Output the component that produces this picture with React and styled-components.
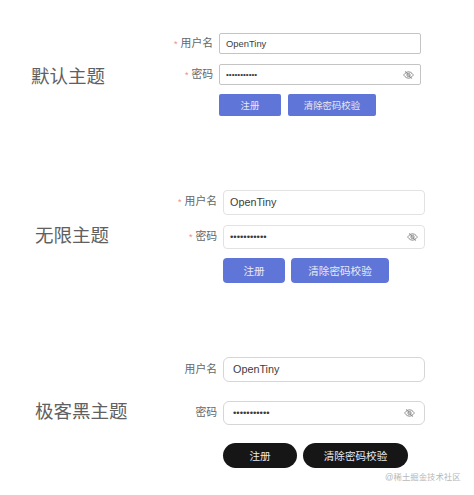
import styled, { createGlobalStyle } from "styled-components"

const GlobalStyle = createGlobalStyle`
    html, body {
        margin: 0;
        padding: 0;
        background: #fff;
    }
`

const themes = [
    {
        name: "默认主题",
        required: true,
        offset: 31,
        titleShift: 4,
        inputHeight: 21,
        inputFont: 9.4,
        inputPadding: 6,
        dotFont: 8.1,
        border: "#c4c4c4",
        radius: 2,
        rowGap: 10,
        buttonHeight: 22,
        buttonFont: 9.4,
        buttonGap: 7,
        buttonRadius: 2,
        buttonColor: "#5f76d8",
        widths: [62, 88],
        iconRight: 7,
    },
    {
        name: "无限主题",
        required: true,
        offset: 35,
        titleShift: -2,
        inputHeight: 24.5,
        inputFont: 10.8,
        inputPadding: 6,
        dotFont: 9.5,
        border: "#e2e2e2",
        radius: 4,
        rowGap: 10,
        buttonHeight: 25,
        buttonFont: 10.6,
        buttonGap: 6,
        buttonRadius: 4,
        buttonColor: "#5f76d8",
        widths: [62, 98],
        iconRight: 7,
    },
    {
        name: "极客黑主题",
        required: false,
        offset: 35,
        titleShift: -1,
        inputHeight: 24.5,
        inputFont: 10.8,
        inputPadding: 9,
        dotFont: 9.5,
        border: "#d6d6d6",
        radius: 6,
        rowGap: 19,
        buttonHeight: 25,
        buttonFont: 10.6,
        buttonGap: 6,
        buttonRadius: 13,
        buttonColor: "#161616",
        widths: [74, 105],
        iconRight: 10,
    },
]

function EyeOffIcon() {
    return (
        <svg width="11" height="11" viewBox="0 0 24 24" fill="none" stroke="currentColor" strokeWidth="2">
            <path d="M1.5 12S5.5 5 12 5s10.500 7 10.500 7-4 7-10.500 7S1.500 12 1.500 12z" />
            <circle cx="12" cy="12" r="3.500" />
            <path d="M5 4l14 16" />
        </svg>
    )
}

function ThemeForm({ theme }) {
    return (
        <Section $offset={theme.offset}>
            <Title $shift={theme.titleShift}>{theme.name}</Title>
            <Form $gap={theme.rowGap}>
                <Row>
                    <Label $required={theme.required}>用户名</Label>
                    <Field $theme={theme} $font={theme.inputFont} type="text" defaultValue="OpenTiny" />
                </Row>
                <Row>
                    <Label $required={theme.required}>密码</Label>
                    <PasswordBox>
                        <Field $theme={theme} $font={theme.dotFont} type="password" defaultValue="opentiny012" />
                        <EyeIcon $right={theme.iconRight}>
                            <EyeOffIcon />
                        </EyeIcon>
                    </PasswordBox>
                </Row>
                <Buttons $gap={theme.buttonGap}>
                    <Button $theme={theme} $width={theme.widths[0]}>注册</Button>
                    <Button $theme={theme} $width={theme.widths[1]}>清除密码校验</Button>
                </Buttons>
            </Form>
        </Section>
    )
}

export default function App() {
    return (
        <Page>
            <GlobalStyle />
            {themes.map((theme) => (
                <ThemeForm key={theme.name} theme={theme} />
            ))}
            <Watermark>@稀土掘金技术社区</Watermark>
        </Page>
    )
}

const Page = styled.div`
    position: relative;
    display: flex;
    flex-direction: column;
    gap: 74px;
    box-sizing: border-box;
    width: 474px;
    height: 495px;
    padding-top: 33px;
    overflow: hidden;
    background: #fff;
    font-family: "Liberation Sans", "Noto Sans CJK SC", sans-serif;
`

const Section = styled.section`
    display: flex;
    align-items: center;
    margin-left: ${(props) => props.$offset}px;
`

const Title = styled.h2`
    flex: 0 0 130px;
    margin: ${(props) => props.$shift}px 0 0;
    color: #606060;
    font-size: 18.5px;
    font-weight: 400;
    line-height: 24px;
`

const Form = styled.form`
    display: flex;
    flex-direction: column;
    gap: ${(props) => props.$gap}px;
`

const Row = styled.div`
    display: flex;
    align-items: center;
    gap: 6px;
`

const Label = styled.label`
    width: 52px;
    margin-bottom: 1px;
    color: #666;
    font-size: 10.800px;
    line-height: 14px;
    text-align: right;
    white-space: nowrap;
    &::before {
        content: ${(props) => (props.$required ? '"*"' : "none")};
        margin-right: 3px;
        color: #ec8f88;
        font-size: 9px;
    }
`

const Field = styled.input`
    display: block;
    box-sizing: border-box;
    width: 202px;
    height: ${(props) => props.$theme.inputHeight}px;
    padding: 0 ${(props) => props.$theme.inputPadding}px;
    border: 1px solid ${(props) => props.$theme.border};
    border-radius: ${(props) => props.$theme.radius}px;
    outline: none;
    background: #fff;
    color: #3c3c3c;
    font-family: inherit;
    font-size: ${(props) => props.$font}px;
`

const PasswordBox = styled.div`
    position: relative;
`

const EyeIcon = styled.span`
    position: absolute;
    top: 50%;
    right: ${(props) => props.$right}px;
    display: flex;
    color: #808080;
    transform: translateY(-50%);
`

const Buttons = styled.div`
    display: flex;
    gap: ${(props) => props.$gap}px;
    margin-left: 58px;
    margin-top: -1px;
`

const Button = styled.button.attrs({ type: "button" })`
    width: ${(props) => props.$width}px;
    height: ${(props) => props.$theme.buttonHeight}px;
    padding: 0;
    border: none;
    border-radius: ${(props) => props.$theme.buttonRadius}px;
    background: ${(props) => props.$theme.buttonColor};
    color: #e8e9f2;
    font-family: inherit;
    font-size: ${(props) => props.$theme.buttonFont}px;
`

const Watermark = styled.span`
    position: absolute;
    top: 471px;
    left: 385px;
    color: #b8b8b8;
    font-size: 8.4px;
    line-height: 12px;
    white-space: nowrap;
`
